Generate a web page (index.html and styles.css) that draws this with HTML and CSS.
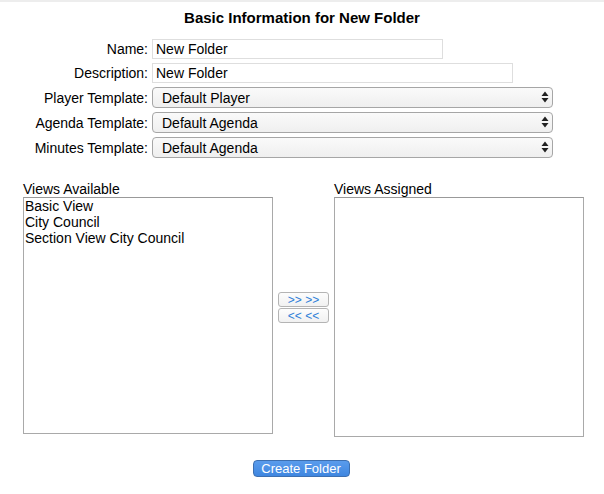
FILE: index.html
```html
<!DOCTYPE html>
<html lang="en">
<head>
    <meta charset="UTF-8">
    <title>New Folder</title>
    <link rel="stylesheet" href="styles.css">
</head>
<body>

<div class="page">
    <h1 class="title">Basic Information for New Folder</h1>

    <div class="form">
        <label class="label" for="name">Name:</label>
        <div><input type="text" id="name" class="field field-name" value="New Folder"></div>

        <label class="label" for="desc">Description:</label>
        <div><input type="text" id="desc" class="field field-desc" value="New Folder"></div>

        <label class="label" for="player">Player Template:</label>
        <div class="picker">
            <select id="player" class="dropdown"><option>Default Player</option></select>
            <svg class="arrows" width="8" height="12" viewBox="0 0 8 12"><path d="M4 0.5 L7.5 5 L0.5 5 Z M4 11.5 L7.5 7 L0.5 7 Z" fill="#222"/></svg>
        </div>

        <label class="label" for="agenda">Agenda Template:</label>
        <div class="picker">
            <select id="agenda" class="dropdown"><option>Default Agenda</option></select>
            <svg class="arrows" width="8" height="12" viewBox="0 0 8 12"><path d="M4 0.5 L7.5 5 L0.5 5 Z M4 11.5 L7.5 7 L0.5 7 Z" fill="#222"/></svg>
        </div>

        <label class="label" for="minutes">Minutes Template:</label>
        <div class="picker">
            <select id="minutes" class="dropdown"><option>Default Agenda</option></select>
            <svg class="arrows" width="8" height="12" viewBox="0 0 8 12"><path d="M4 0.5 L7.5 5 L0.5 5 Z M4 11.5 L7.5 7 L0.5 7 Z" fill="#222"/></svg>
        </div>
    </div>

    <div class="views">
        <div class="view-col">
            <div class="view-label">Views Available</div>
            <div class="listbox list-left">
                <div class="item">Basic View</div>
                <div class="item">City Council</div>
                <div class="item">Section View City Council</div>
            </div>
        </div>
        <div class="movers">
            <button class="mover">&gt;&gt; &gt;&gt;</button>
            <button class="mover">&lt;&lt; &lt;&lt;</button>
        </div>
        <div class="view-col">
            <div class="view-label">Views Assigned</div>
            <div class="listbox list-right"></div>
        </div>
    </div>

    <div class="actions">
        <button class="create">Create Folder</button>
    </div>
</div>

</body>
</html>
```

FILE: styles.css
```css
body {
    margin: 0;
    background: #fff;
    font-family: "Liberation Sans", Arial, sans-serif;
    color: #000;
    border-top: 2px solid #ededed;
}
.title {
    margin: 0;
    padding-top: 6px;
    font-size: 15px;
    line-height: 19px;
    text-align: center;
}
.form {
    display: grid;
    grid-template-columns: 148px auto;
    column-gap: 4px;
    row-gap: 4px;
    margin-top: 12px;
    align-items: center;
}
.label {
    font-size: 14px;
    text-align: right;
}
.field {
    box-sizing: border-box;
    height: 20px;
    margin: 0;
    padding: 1px 3px;
    border: 1px solid #dedede;
    font-family: inherit;
    font-size: 14px;
    color: #000;
    background: #fff;
}
.field-name {
    width: 291px;
}
.field-desc {
    width: 361px;
}
.picker {
    position: relative;
    width: 401px;
    height: 21px;
}
.dropdown {
    appearance: none;
    -webkit-appearance: none;
    box-sizing: border-box;
    width: 401px;
    height: 21px;
    margin: 0;
    padding: 0 9px;
    border: 1px solid #a6a6a6;
    border-radius: 4px;
    background: linear-gradient(#fafafa, #efefef);
    font-family: inherit;
    font-size: 14px;
    color: #000;
}
.arrows {
    position: absolute;
    right: 4px;
    top: 4px;
}
.views {
    display: flex;
    margin-top: 23px;
    padding-left: 23px;
}
.view-label {
    font-size: 14px;
    line-height: 16px;
}
.listbox {
    box-sizing: border-box;
    border: 1px solid #a9a9a9;
    border-top-color: #999;
    background: #fff;
}
.list-left {
    width: 250px;
    height: 237px;
}
.list-right {
    width: 250px;
    height: 240px;
}
.item {
    font-size: 14px;
    line-height: 16px;
    padding-left: 1px;
}
.movers {
    display: flex;
    flex-direction: column;
    gap: 1px;
    padding-top: 111px;
    margin: 0 5px 0 5px;
}
.mover {
    box-sizing: border-box;
    width: 51px;
    height: 15px;
    margin: 0;
    padding: 0;
    border: 1px solid #b4b4b4;
    border-radius: 3px;
    background: linear-gradient(#fdfdfd, #f1f1f1);
    color: #2f7fd8;
    font-family: inherit;
    font-size: 12px;
    line-height: 12px;
}
.actions {
    display: flex;
    justify-content: center;
    margin-top: 23px;
    padding-right: 2px;
}
.create {
    box-sizing: border-box;
    width: 97px;
    height: 17px;
    margin: 0;
    padding: 0;
    border: 1px solid #3d6fb0;
    border-radius: 4px;
    background: linear-gradient(#5a9cec, #3f86e0);
    color: #fff;
    font-family: inherit;
    font-size: 13px;
    line-height: 14px;
}
```
